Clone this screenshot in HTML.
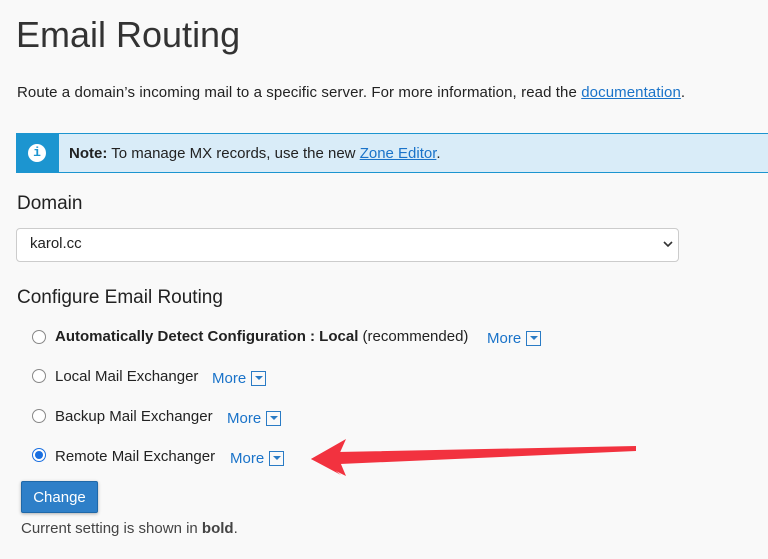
<!DOCTYPE html>
<html><head><meta charset="utf-8"><style>
body{margin:0;width:768px;height:559px;background:#f9f9f9;font-family:"Liberation Sans",sans-serif;color:#222;position:relative;overflow:hidden}
.a{position:absolute;white-space:nowrap}
h1{position:absolute;left:16px;top:14px;margin:0;font-weight:normal;font-size:36px;color:#333}
a{color:#1a73c9}
.more{color:#1a73c9;font-size:15px}
.dd{display:inline-block;width:15px;height:15px;border:1.5px solid #2a7bc5;vertical-align:-3px;margin-left:5px;position:relative;box-sizing:border-box}
.dd:after{content:"";position:absolute;left:2.5px;top:4px;border-left:4px solid transparent;border-right:4px solid transparent;border-top:4.5px solid #2a7bc5}
.r{position:absolute;left:32px;width:12px;height:12px;border:1px solid #888;border-radius:50%;background:#fff}
.lbl{font-size:15px}
</style></head><body>
<h1>Email Routing</h1>
<div class="a" style="left:17px;top:84px;font-size:15px;letter-spacing:0.1px">Route a domain’s incoming mail to a specific server. For more information, read the <a href="#">documentation</a>.</div>
<div class="a" style="left:16px;top:133px;width:760px;height:40px;background:#d9ecf8;border:1px solid #1c95d0;box-sizing:border-box"></div>
<div class="a" style="left:16px;top:133px;width:43px;height:40px;background:#1c95d0"></div>
<div class="a" style="left:28px;top:144px;width:18px;height:18px;border-radius:50%;background:#fff;color:#1c95d0;font-weight:bold;font-size:13px;text-align:center;line-height:18px;font-family:'Liberation Mono',monospace">i</div>
<div class="a" style="left:69px;top:145px;font-size:15px"><b>Note:</b> To manage MX records, use the new <a href="#">Zone Editor</a>.</div>
<div class="a" style="left:17px;top:193px;font-size:19px;color:#222">Domain</div>
<div class="a" style="left:16px;top:228px;width:663px;height:34px;background:#fff;border:1px solid #ccc;border-radius:4px;box-sizing:border-box"></div>
<div class="a" style="left:30px;top:235px;font-size:15px">karol.cc</div>
<svg class="a" style="left:663px;top:240px" width="10" height="8"><path d="M1 2L5 6L9 2" stroke="#333" stroke-width="1.6" fill="none"/></svg>
<div class="a" style="left:17px;top:287px;font-size:19px;color:#222">Configure Email Routing</div>
<div class="r" style="top:330px"></div>
<div class="a lbl" style="left:55px;top:328px"><b>Automatically Detect Configuration : Local</b> (recommended)</div>
<div class="a more" style="left:487px;top:330px">More<span class="dd"></span></div>
<div class="r" style="top:369px"></div>
<div class="a lbl" style="left:55px;top:368px">Local Mail Exchanger</div>
<div class="a more" style="left:212px;top:370px">More<span class="dd"></span></div>
<div class="r" style="top:409px"></div>
<div class="a lbl" style="left:55px;top:408px">Backup Mail Exchanger</div>
<div class="a more" style="left:227px;top:410px">More<span class="dd"></span></div>
<div class="a" style="left:32px;top:448px;width:12px;height:12px;border:1px solid #1a6fe0;border-radius:50%;background:#fff;box-sizing:content-box"><div style="margin:2px;width:8px;height:8px;border-radius:50%;background:#1a6fe0"></div></div>
<div class="a lbl" style="left:55px;top:448px">Remote Mail Exchanger</div>
<div class="a more" style="left:230px;top:450px">More<span class="dd"></span></div>
<svg class="a" style="left:0;top:0" width="768" height="559"><path d="M636 446L636 451L340 464L323 461L341 475L311 459L345 440L337 452Z" fill="#f2323f"/><path d="M311 459L346 439L338 457L346 476Z" fill="#f2323f"/></svg>
<div class="a" style="left:21px;top:481px;width:77px;height:32px;background:#2e7fc8;border:1px solid #1f68a8;border-radius:2px;box-shadow:0 1px 3px rgba(0,0,0,.3);color:#fff;font-size:15px;text-align:center;line-height:32px;box-sizing:border-box">Change</div>
<div class="a" style="left:21px;top:520px;font-size:15px;color:#444">Current setting is shown in <b>bold</b>.</div>
</body></html>
